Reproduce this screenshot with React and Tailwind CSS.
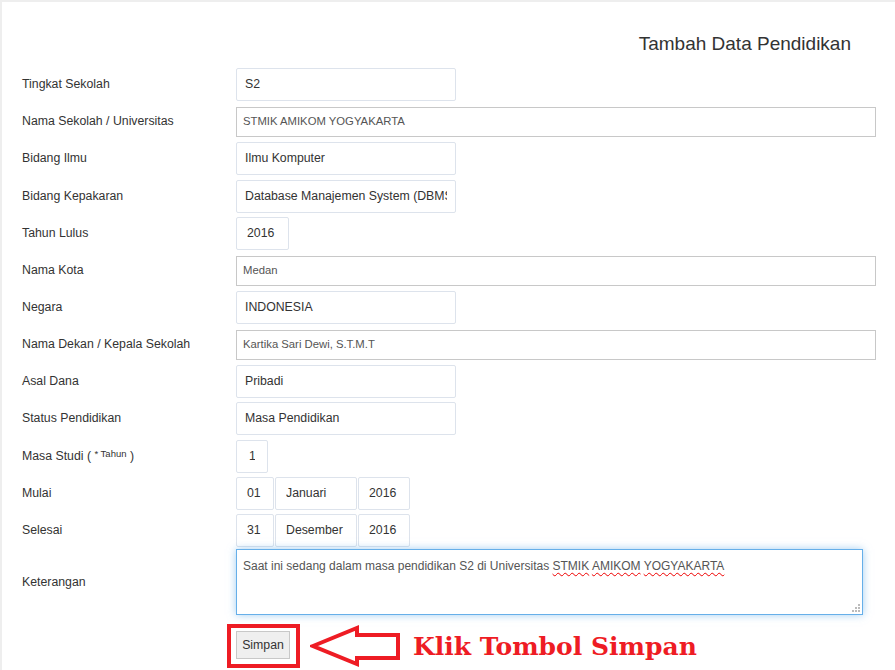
import React from "react";

const FONT = { fontFamily: '"Liberation Sans", Arial, sans-serif' };

// short boxes (light rounded border) vs wide ones (gray square border)
const Box = ({ children, className = "" }) => (
  <div className={`flex h-[33px] items-center rounded-[2px] border border-[#dde3ec] bg-white text-[12.3px] text-[#333] ${className}`}>
    <span className="block w-full overflow-hidden whitespace-nowrap">{children}</span>
  </div>
);

const Wide = ({ children }) => (
  <div className="flex h-[30px] w-[640px] items-center border border-[#c8c8c8] bg-white px-[6px] text-[11.3px] text-[#555]">
    {children}
  </div>
);

const Row = ({ label, children, className = "h-[37px]" }) => (
  <div className={`flex items-center ${className}`}>
    <div className="w-[234px] pl-[20px] text-[12.3px] text-[#333]">{label}</div>
    <div className="flex gap-[1px]">{children}</div>
  </div>
);

const rows = [
  { label: "Tingkat Sekolah", box: <Box className="w-[220px] px-[8px]">S2</Box> },
  { label: "Nama Sekolah / Universitas", box: <Wide>STMIK AMIKOM YOGYAKARTA</Wide> },
  { label: "Bidang Ilmu", box: <Box className="w-[220px] px-[8px]">Ilmu Komputer</Box> },
  {
    label: "Bidang Kepakaran",
    box: <Box className="w-[220px] px-[8px]">Database Manajemen System (DBMS)</Box>,
    extra: "mt-[1px] h-[37px]",
  },
  { label: "Tahun Lulus", box: <Box className="w-[53px] px-[10px]">2016</Box> },
  { label: "Nama Kota", box: <Wide>Medan</Wide> },
  { label: "Negara", box: <Box className="w-[220px] px-[8px]">INDONESIA</Box> },
  { label: "Nama Dekan / Kepala Sekolah", box: <Wide>Kartika Sari Dewi, S.T.M.T</Wide> },
  { label: "Asal Dana", box: <Box className="w-[220px] px-[8px]">Pribadi</Box> },
  { label: "Status Pendidikan", box: <Box className="w-[220px] px-[8px]">Masa Pendidikan</Box> },
];

const Arrow = () => (
  <svg width="92" height="42" viewBox="0 0 92 42" className="ml-[10px]">
    <polygon
      points="3,21 47,3 47,10 88,10 88,33 47,33 47,39"
      fill="white"
      stroke="#ee1c24"
      strokeWidth="4"
      strokeLinejoin="miter"
    />
  </svg>
);

export default function App() {
  return (
    <div className="min-h-[670px] bg-[#eeeeee] pl-[2px] pt-[2px]" style={FONT}>
      <div className="min-h-[668px] bg-white">
        {/* HEADER */}
        <div className="flex h-[64px] items-end justify-end pb-[13px] pr-[44px]">
          <h2 className="text-[19px] leading-none text-[#333]">Tambah Data Pendidikan</h2>
        </div>

        {/* FORM */}
        {rows.map((r) => (
          <Row key={r.label} label={r.label} className={r.extra}>
            {r.box}
          </Row>
        ))}

        <Row
          className="mt-[1px] h-[37px]"
          label={
            <span>
              Masa Studi ( <span className="relative -top-[3px] text-[9.5px]">* Tahun</span> )
            </span>
          }
        >
          <Box className="w-[32px] px-[12px]">1</Box>
        </Row>

        <Row label="Mulai">
          <Box className="w-[38px] px-[10px]">01</Box>
          <Box className="w-[82px] px-[10px]">Januari</Box>
          <Box className="w-[52px] px-[10px]">2016</Box>
        </Row>

        <Row label="Selesai">
          <Box className="w-[38px] px-[10px]">31</Box>
          <Box className="w-[82px] px-[10px]">Desember</Box>
          <Box className="w-[52px] px-[10px]">2016</Box>
        </Row>

        {/* TEXTAREA */}
        <div className="flex items-center">
          <div className="w-[234px] pl-[20px] text-[12.3px] text-[#333]">Keterangan</div>
          <div className="relative h-[66px] w-[627px] border border-[#66afe9] bg-white px-[6px] pt-[7px] text-[12px] text-[#555] shadow-[0_0_8px_rgba(102,175,233,0.6)]">
            Saat ini sedang dalam masa pendidikan S2 di Universitas{" "}
            <span className="underline decoration-[#e00] decoration-wavy decoration-1 underline-offset-2">STMIK</span>{" "}
            <span className="underline decoration-[#e00] decoration-wavy decoration-1 underline-offset-2">AMIKOM</span>{" "}
            <span className="underline decoration-[#e00] decoration-wavy decoration-1 underline-offset-2">YOGYAKARTA</span>
            <svg width="8" height="8" viewBox="0 0 8 8" className="absolute bottom-[2px] right-[2px]">
              <rect x="6" y="0" width="2" height="2" fill="#bbb" />
              <rect x="3" y="3" width="2" height="2" fill="#bbb" />
              <rect x="6" y="3" width="2" height="2" fill="#bbb" />
              <rect x="0" y="6" width="2" height="2" fill="#bbb" />
              <rect x="3" y="6" width="2" height="2" fill="#bbb" />
              <rect x="6" y="6" width="2" height="2" fill="#bbb" />
            </svg>
          </div>
        </div>

        {/* SUBMIT */}
        <div className="mt-[9px] flex items-center pl-[225px]">
          <div className="border-4 border-[#ee1c24] pb-[5px] pl-[5px] pr-[6px] pt-[3px]">
            <button className="h-[28px] w-[54px] border border-[#c8c8c8] bg-[#efefef] text-[12.3px] text-[#333]">
              Simpan
            </button>
          </div>
          <Arrow />
          <span
            className="ml-[11px] text-[25px] font-bold leading-none text-[#ee1c24]"
            style={{ fontFamily: '"DejaVu Serif", "Liberation Serif", serif' }}
          >
            Klik Tombol Simpan
          </span>
        </div>
      </div>
    </div>
  );
}
